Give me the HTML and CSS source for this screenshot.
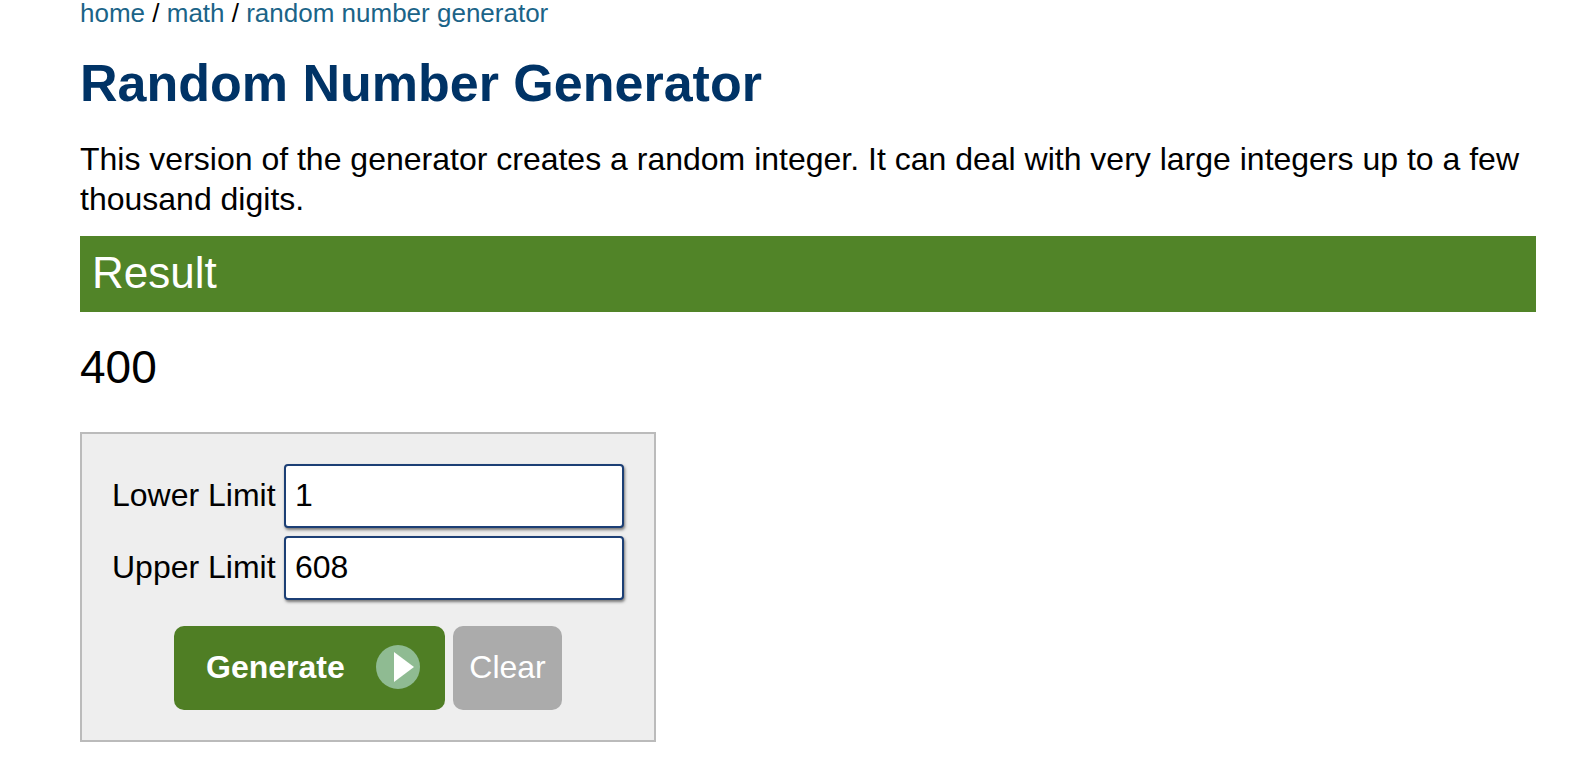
FILE: index.html
```html
<!DOCTYPE html>
<html lang="en">
<head>
    <meta charset="UTF-8">
    <meta name="viewport" content="width=device-width, initial-scale=1.0">
    <title>Random Number Generator</title>
    <link rel="stylesheet" href="styles.css">
</head>
<body>
    <div class="content">
        <!-- Breadcrumb -->
        <div class="breadcrumb"><a href="#">home</a> / <a href="#">math</a> / <a href="#">random number generator</a></div>

        <h1>Random Number Generator</h1>
        <p class="intro">This version of the generator creates a random integer. It can deal with very large integers up to a few thousand digits.</p>

        <!-- Result -->
        <h2 class="result-title">Result</h2>
        <div class="result-value">400</div>

        <!-- Form -->
        <form class="panel">
            <div class="fields">
                <label class="field-label" for="lower">Lower Limit</label>
                <input class="field-input" type="text" id="lower" value="1">
                <label class="field-label" for="upper">Upper Limit</label>
                <input class="field-input" type="text" id="upper" value="608">
            </div>
            <div class="buttons">
                <button type="button" class="btn-generate">
                    <span>Generate</span>
                    <svg class="play-icon" viewBox="0 0 44 44" width="44" height="44" aria-hidden="true">
                        <circle cx="22" cy="22" r="22" fill="#8fbb92"/>
                        <polygon points="18,7 38,22 18,37" fill="#fff"/>
                    </svg>
                </button>
                <button type="button" class="btn-clear">Clear</button>
            </div>
        </form>
    </div>
</body>
</html>
```

FILE: styles.css
```css
body {
    font-family: "Liberation Sans", Arial, sans-serif;
    background-color: #fff;
    color: #000;
    margin: 0;
}
.content {
    width: 1456px;
    margin-left: 80px;
}
.breadcrumb {
    font-size: 26px;
    line-height: 26px;
}
.breadcrumb a {
    color: #1b6488;
    text-decoration: none;
}
h1 {
    font-size: 52px;
    line-height: 58px;
    font-weight: bold;
    color: #003366;
    margin: 28px 0 0;
}
.intro {
    font-size: 32px;
    line-height: 40px;
    margin: 27px 0 0;
}
.result-title {
    background-color: #518428;
    color: #fff;
    font-size: 44px;
    line-height: 74px;
    font-weight: normal;
    height: 76px;
    padding-left: 12px;
    margin: 17px 0 0;
}
.result-value {
    font-size: 46px;
    line-height: 50px;
    margin-top: 30px;
}
.panel {
    box-sizing: border-box;
    width: 576px;
    height: 310px;
    margin-top: 40px;
    padding: 30px 30px 0;
    background-color: #eee;
    border: 2px solid #bbb;
}
.fields {
    display: grid;
    grid-template-columns: 164px 340px;
    column-gap: 8px;
    row-gap: 8px;
    align-items: center;
}
.field-label {
    font-size: 32px;
    white-space: nowrap;
    padding-bottom: 2px;
}
.field-input {
    box-sizing: border-box;
    width: 340px;
    height: 64px;
    padding: 0 9px 2px;
    font-family: inherit;
    font-size: 32px;
    color: #000;
    background-color: #fff;
    border: 2px solid #1c3f75;
    border-radius: 4px;
    box-shadow: 1px 2px 3px #777;
}
.buttons {
    display: flex;
    gap: 8px;
    margin-top: 26px;
    margin-left: 62px;
}
.btn-generate,
.btn-clear {
    height: 84px;
    border: none;
    border-radius: 10px;
    color: #fff;
    font-family: inherit;
    font-size: 32px;
    cursor: pointer;
}
.btn-generate {
    display: flex;
    align-items: center;
    justify-content: space-between;
    width: 271px;
    padding: 0 25px 2px 32px;
    background-color: #4f7e24;
    font-weight: bold;
}
.btn-clear {
    width: 109px;
    padding: 0 0 2px;
    background-color: #ababab;
}
```
